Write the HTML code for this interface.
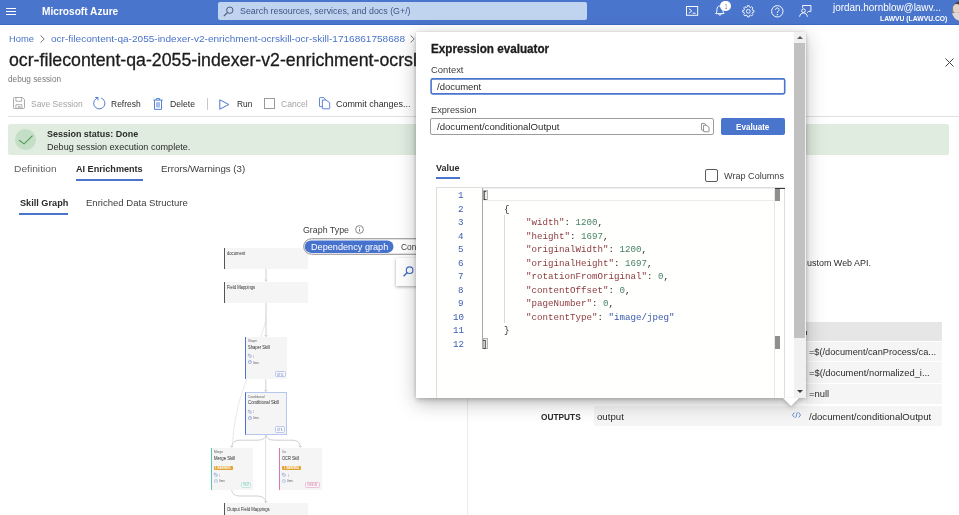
<!DOCTYPE html>
<html>
<head>
<meta charset="utf-8">
<title>Debug session</title>
<style>
*{box-sizing:border-box;margin:0;padding:0}
html,body{width:959px;height:515px;overflow:hidden;background:#fff}
body{position:relative;font-family:"Liberation Sans",sans-serif;color:#242424;font-size:11px}
#wrap{position:absolute;left:0;top:0;width:959px;height:515px;overflow:hidden;will-change:transform}
.a{position:absolute}
.t{position:absolute;white-space:nowrap;line-height:1;color:#2b2b2b;transform-origin:0 0}
.b{font-weight:bold}
.m{font-family:"Liberation Mono",monospace}
.w{color:#fff}
.g{color:#5f5f5f}
.lg{color:#a3a3a3}
.g2{color:#3d3d3d}
.g3{color:#7a7a7a}
.tt{color:#1c1c1c;-webkit-text-stroke:.3px #1c1c1c}
.sp{color:#3d5484}
.lk{color:#4a73c9}
.k{color:#8c3a3d}
.n{color:#4a8266}
.s{color:#3a5ba8}
.ln{color:#3d5cb0}
.bdg{color:#3f5078}
.c6f88d4{color:#5f7ace}
.c7fd0bd{color:#5fc2ab}
.cdc8fb4{color:#d0709f}
i{font-style:normal}
svg{position:absolute;overflow:visible}
#top{left:0;top:0;width:959px;height:25px;background:#4a75cc;border-bottom:1px solid #3f69c6}
#search{left:218px;top:2px;width:369px;height:18.4px;background:#c0d4f0;border-radius:2px}
#status{left:8px;top:124px;width:941px;height:31px;background:#dfecdf;border-radius:2.5px}
#modal{left:416px;top:32px;width:389.5px;height:366px;background:#fff;box-shadow:0 5px 18px rgba(0,0,0,.25),0 3px 5px rgba(0,0,0,.15),0 0 4px rgba(0,0,0,.13)}
.ul{position:absolute;height:2px;background:#4a75cc}
.row{position:absolute;left:806px;width:135.7px;height:19.5px;background:#f5f5f5}
.node{position:absolute;background:#f5f5f5}
</style>
</head>
<body>
<div id="wrap">
<!-- TOP BAR -->
<div id="top" class="a"></div>
<div id="search" class="a"></div>
<svg style="left:6px;top:7.5px" width="10" height="7" viewBox="0 0 10 7"><path d="M0 .5h10M0 3.5h10M0 6.5h10" stroke="#fff" stroke-width="1" fill="none"/></svg>
<span class="t b w" style="left:42.30px;top:6px;font-size:11px;transform:scaleX(0.9217)">Microsoft Azure</span>
<svg style="left:223px;top:6px" width="11" height="11" viewBox="0 0 11 11"><circle cx="6.8" cy="4.2" r="3.2" stroke="#4b5a78" stroke-width="1" fill="none"/><path d="M4.5 6.5L.8 10.2" stroke="#4b5a78" stroke-width="1.1"/></svg>
<span class="t sp" style="left:239.70px;top:6px;font-size:9.9px;transform:scaleX(0.8969)">Search resources, services, and docs (G+/)</span>
<span class="t w" style="left:833.44px;top:2px;font-size:10.5px;transform:scaleX(0.9446)">jordan.hornblow@lawv...</span>
<span class="t b w" style="left:879.70px;top:15px;font-size:7.2px;transform:scaleX(0.9421)">LAWVU (LAWVU.CO)</span>

<!-- TOP RIGHT ICONS -->
<svg style="left:685.5px;top:6px" width="12.2" height="9.8" viewBox="0 0 12.2 9.8"><g stroke="#fff" stroke-width=".95" fill="none"><rect x=".5" y=".5" width="11.2" height="8.8"/><path d="M2.9 2.6l2.9 2.3-2.9 2.3M6.6 7.2h3"/></g></svg>
<svg style="left:715px;top:5px" width="10" height="11" viewBox="0 0 10 11"><g stroke="#fff" stroke-width=".95" fill="none"><path d="M.6 8.6c1.1-.9 1.3-1.9 1.3-4.1C1.9 2.4 3.1 1 4.9 1s3 1.400 3 3.500c0 2.200.2 3.200 1.300 4.100z"/><path d="M3.600 9c.2.900.7 1.300 1.300 1.300s1.100-.4 1.300-1.300"/></g></svg>
<div class="a" style="left:720.2px;top:1.1px;width:10.4px;height:10.4px;border-radius:50%;background:#fff"></div>
<span class="t bdg" style="left:724.60px;top:3px;font-size:7.4px;transform:scaleX(0.5000)">1</span>
<svg style="left:742px;top:4.6px" width="12.6" height="12.6" viewBox="-6.3 -6.3 12.6 12.6"><g stroke="#fff" stroke-width=".9" fill="none" stroke-linejoin="round"><circle r="1.9"/><path d="M-1.13 -4.25 L-0.85 -5.64 L0.85 -5.64 L1.13 -4.25 L2.21 -3.81 L3.38 -4.59 L4.59 -3.38 L3.81 -2.21 L4.25 -1.13 L5.64 -0.85 L5.64 0.85 L4.25 1.13 L3.81 2.21 L4.59 3.38 L3.38 4.59 L2.21 3.81 L1.13 4.25 L0.85 5.64 L-0.85 5.64 L-1.13 4.25 L-2.21 3.81 L-3.38 4.59 L-4.59 3.38 L-3.81 2.21 L-4.25 1.13 L-5.64 0.85 L-5.64 -0.85 L-4.25 -1.13 L-3.81 -2.21 L-4.59 -3.38 L-3.38 -4.59 L-2.21 -3.81Z"/></g></svg>
<svg style="left:770.600px;top:4.600px" width="12.6" height="12.6" viewBox="-6.3 -6.3 12.6 12.6"><g stroke="#fff" stroke-width=".95" fill="none"><circle r="5.700"/><path d="M-1.800 -1.500c0-1.100.8-1.800 1.800-1.800s1.800.7 1.800 1.700c0 1.500-1.800 1.500-1.800 3.200"/></g><circle cy="3.400" r=".65" fill="#fff"/></svg>
<svg style="left:799px;top:5px" width="12.5" height="12" viewBox="0 0 12.5 12"><g stroke="#fff" stroke-width=".95" fill="none"><circle cx="4.500" cy="5.700" r="1.800"/><path d="M.6 11.700c.3-2.400 1.900-3.700 3.900-3.700s3.600 1.300 3.900 3.700"/><path d="M3.600 2.800V.5h8.300v5.900H9.600L8.200 7.800"/></g></svg>
<div class="a" style="left:951.5px;top:1.2px;width:19.6px;height:19.6px;border-radius:50%;background:#8b8078;overflow:hidden"><div class="a" style="left:0;top:0;width:9px;height:5px;background:#4a4340"></div><div class="a" style="left:1.5px;top:3px;width:7px;height:9px;border-radius:45%;background:#e3d3c8"></div><div class="a" style="left:0;top:11.5px;width:10px;height:9px;background:#dcd9d8"></div></div>

<!-- BREADCRUMB + TITLE -->
<span class="t lk" style="left:8.50px;top:34px;font-size:9.9px;transform:scaleX(0.9497)">Home</span>
<span class="t lk" style="left:50.50px;top:34px;font-size:9.9px;transform:scaleX(1.0172)">ocr-filecontent-qa-2055-indexer-v2-enrichment-ocrskill-ocr-skill-1716861758688</span>
<span class="t tt" style="left:8.70px;top:52px;font-size:17.8px;transform:scaleX(0.9968)">ocr-filecontent-qa-2055-indexer-v2-enrichment-ocrsl</span>
<span class="t g3" style="left:8.20px;top:75px;font-size:9px;transform:scaleX(0.9149)">debug session</span>

<!-- GRAPH -->
<svg style="left:0;top:0" width="420" height="515" viewBox="0 0 420 515">
<g stroke="#c9c9c9" stroke-width=".9" fill="none">
<path d="M266 268.8V281"/><path d="M264.6 279.7l1.4 1.6 1.4-1.6" />
<path d="M266 303V336.4"/><path d="M264.6 335l1.4 1.6 1.4-1.6"/>
<path d="M265.8 379.2V391.6"/><path d="M264.4 390.2l1.4 1.6 1.4-1.6"/>
<path d="M265.6 434.6V502.4" stroke="#dedede"/><path d="M264.6 501l1.400 1.600 1.400-1.600"/>
<path d="M266 434.6C265.5 439 262 440.2 256 440.2H240C234.5 440.2 232 442.5 231.8 447"/><path d="M230.4 445.8l1.4 1.6 1.4-1.6"/>
<path d="M266 434.6C266.5 439 270 440.2 276 440.2H292C297.5 440.2 300 442.5 300.3 447"/><path d="M298.9 445.8l1.4 1.6 1.4-1.6"/>
<path d="M231.7 489.7C232 494 235 496 240 496H256C262 496 265.5 498 266 502.4"/>
</g>
<g stroke="#dadada" stroke-width=".6" fill="none">
<path d="M266 318C265 326 262.5 331 261 337"/>
<path d="M247 379.2C240 395 233.5 420 232.3 447"/>
</g>
</svg>
<div class="node" style="left:224px;top:247.5px;width:84px;height:21.3px;border-left:1.3px solid #555"></div>
<div class="node" style="left:224px;top:281.8px;width:84px;height:21.2px;border-left:1.3px solid #555"></div>
<div class="node" style="left:245px;top:337px;width:41.7px;height:42.2px;border-left:1.5px solid #5672c8"></div>
<div class="node" style="left:245px;top:392.3px;width:42px;height:42.3px;border:1px solid #b7c6ee;border-left:1.5px solid #4f6cc6"></div>
<div class="node" style="left:211px;top:447.8px;width:41.8px;height:41.9px;border-left:1.5px solid #5cc5ad"></div>
<div class="node" style="left:279.2px;top:447.8px;width:42.6px;height:41.9px;border-left:1.7px solid #d579a6"></div>
<div class="node" style="left:224.3px;top:503.1px;width:83.7px;height:12px;border-left:1.3px solid #555"></div>
<span class="t" style="left:227.20px;top:252px;font-size:4.9px;transform:scaleX(0.8500)">document</span>
<span class="t" style="left:227.20px;top:286px;font-size:4.9px;transform:scaleX(0.8482)">Field Mappings</span>
<span class="t" style="left:227.40px;top:508px;font-size:4.9px;transform:scaleX(0.8682)">Output Field Mappings</span>
<span class="t g" style="left:248.00px;top:340px;font-size:3.7px;transform:scaleX(0.7660)">Shaper</span>
<span class="t" style="left:248.00px;top:345px;font-size:5.2px;transform:scaleX(0.7883)">Shaper Skill</span>
<span class="t g" style="left:247.90px;top:396px;font-size:3.7px;transform:scaleX(0.8964)">Conditional</span>
<span class="t" style="left:247.90px;top:400px;font-size:5.2px;transform:scaleX(0.8353)">Conditional Skill</span>
<span class="t g" style="left:214.00px;top:451px;font-size:3.7px;transform:scaleX(0.8653)">Merge</span>
<span class="t" style="left:214.00px;top:456px;font-size:5.2px;transform:scaleX(0.8234)">Merge Skill</span>
<span class="t g" style="left:282.20px;top:451px;font-size:3.7px;transform:scaleX(0.7300)">Ocr</span>
<span class="t" style="left:282.20px;top:456px;font-size:5.2px;transform:scaleX(0.7659)">OCR Skill</span>

<svg style="left:248px;top:354.4px" width="4" height="4" viewBox="0 0 4 4"><path d="M.3 .3h1.600l1.800 1.800-1.600 1.600L.3 1.900z" stroke="#5672c8" stroke-width=".45" fill="none"/><path d="M1.300 .9l1.900 1.900" stroke="#5672c8" stroke-width=".35"/></svg>
<svg style="left:248px;top:360.3px" width="4" height="4" viewBox="0 0 4 4"><circle cx="1.900" cy="2" r="1.600" stroke="#5672c8" stroke-width=".45" fill="none"/><path d="M1.900 1.100V2h.7" stroke="#5672c8" stroke-width=".35" fill="none"/></svg>
<span class="t g" style="left:253.20px;top:356px;font-size:3.6px;transform:scaleX(0.4500)">1</span>
<span class="t g" style="left:253.00px;top:362px;font-size:3.6px;transform:scaleX(0.8581)">0ms</span>
<div class="a" style="left:275.2px;top:371.4px;width:10.4px;height:5.9px;border:1px solid #bcc8ec;border-radius:1.5px;background:#f8f8fa"></div>
<span class="t c6f88d4" style="left:277.20px;top:374px;font-size:3.4px;transform:scaleX(0.8577)">UTIL</span>
<svg style="left:248px;top:409.8px" width="4" height="4" viewBox="0 0 4 4"><path d="M.3 .3h1.600l1.800 1.800-1.600 1.600L.3 1.900z" stroke="#5672c8" stroke-width=".45" fill="none"/><path d="M1.300 .9l1.900 1.900" stroke="#5672c8" stroke-width=".35"/></svg>
<svg style="left:248px;top:415.7px" width="4" height="4" viewBox="0 0 4 4"><circle cx="1.900" cy="2" r="1.600" stroke="#5672c8" stroke-width=".45" fill="none"/><path d="M1.900 1.100V2h.7" stroke="#5672c8" stroke-width=".35" fill="none"/></svg>
<span class="t g" style="left:253.20px;top:411px;font-size:3.6px;transform:scaleX(0.4500)">1</span>
<span class="t g" style="left:253.00px;top:417px;font-size:3.6px;transform:scaleX(0.8581)">0ms</span>
<div class="a" style="left:275.2px;top:426.4px;width:10.2px;height:6.4px;border:1px solid #bcc8ec;border-radius:1.5px;background:#f8f8fa"></div>
<span class="t c6f88d4" style="left:277.20px;top:429px;font-size:3.4px;transform:scaleX(0.8309)">UTIL</span>
<div class="a" style="left:213.7px;top:465.5px;width:19.6px;height:4.7px;background:#e2a336;border-radius:1px"></div>
<span class="t b w" style="left:215.30px;top:467px;font-size:3.1px;transform:scaleX(0.8938)">1 WARNING</span>
<svg style="left:214px;top:473.2px" width="4" height="4" viewBox="0 0 4 4"><path d="M.3 .3h1.600l1.800 1.800-1.600 1.600L.3 1.900z" stroke="#5672c8" stroke-width=".45" fill="none"/><path d="M1.300 .9l1.900 1.900" stroke="#5672c8" stroke-width=".35"/></svg>
<svg style="left:214px;top:479.1px" width="4" height="4" viewBox="0 0 4 4"><circle cx="1.900" cy="2" r="1.600" stroke="#8a9fd8" stroke-width=".45" fill="none"/><path d="M1.900 1.100V2h.7" stroke="#8a9fd8" stroke-width=".35" fill="none"/></svg>
<span class="t g" style="left:219.20px;top:475px;font-size:3.6px;transform:scaleX(0.4500)">1</span>
<span class="t g" style="left:219.00px;top:480px;font-size:3.6px;transform:scaleX(0.8581)">0ms</span>
<div class="a" style="left:240.6px;top:481.6px;width:10.8px;height:6.8px;border:1px solid #bfe6dc;border-radius:1.5px;background:#f8f8fa"></div>
<span class="t c7fd0bd" style="left:242.50px;top:484px;font-size:3.7px;transform:scaleX(0.6980)">TEXT</span>
<div class="a" style="left:282px;top:465.5px;width:19.0px;height:4.7px;background:#e2a336;border-radius:1px"></div>
<span class="t b w" style="left:283.60px;top:467px;font-size:3.1px;transform:scaleX(0.8607)">1 WARNING</span>
<svg style="left:282.3px;top:473.2px" width="4" height="4" viewBox="0 0 4 4"><path d="M.3 .3h1.600l1.800 1.800-1.600 1.600L.3 1.900z" stroke="#5672c8" stroke-width=".45" fill="none"/><path d="M1.300 .9l1.900 1.900" stroke="#5672c8" stroke-width=".35"/></svg>
<svg style="left:282.3px;top:479.1px" width="4" height="4" viewBox="0 0 4 4"><circle cx="1.900" cy="2" r="1.600" stroke="#8a9fd8" stroke-width=".45" fill="none"/><path d="M1.900 1.100V2h.7" stroke="#8a9fd8" stroke-width=".35" fill="none"/></svg>
<span class="t g" style="left:287.50px;top:475px;font-size:3.6px;transform:scaleX(0.4500)">1</span>
<span class="t g" style="left:287.30px;top:480px;font-size:3.6px;transform:scaleX(0.8581)">0ms</span>
<div class="a" style="left:305.2px;top:481.6px;width:14.6px;height:6.8px;border:1px solid #ecc0d5;border-radius:1.5px;background:#f8f8fa"></div>
<span class="t cdc8fb4" style="left:307.40px;top:484px;font-size:3.7px;transform:scaleX(0.8024)">VISION</span>

<!-- CLOSE X -->
<svg style="left:945px;top:58px" width="9" height="9" viewBox="0 0 9 9"><path d="M.5 .5l8 8M8.5 .5l-8 8" stroke="#444" stroke-width="1" fill="none"/></svg>
<!-- TOOLBAR -->
<svg style="left:13.2px;top:97.2px" width="12" height="12" viewBox="0 0 12 12"><path d="M.5 1.300q0-.8.8-.8h8.200l2 2v8.200q0 .8-.8.800H1.300q-.8 0-.8-.8z M2.900 .5v3.700h5.800V.5 M2.900 11.500V7.700h6v3.800 M5.300 11.500V9.600h1.800v1.900" stroke="#a6a6a6" stroke-width=".95" fill="none"/></svg>
<span class="t lg" style="left:30.80px;top:99px;font-size:9.9px;transform:scaleX(0.8549)">Save Session</span>
<svg style="left:93px;top:97px" width="12.6" height="12.6" viewBox="0 0 12.6 12.6"><path d="M8.22 1.040A5.600 5.600 0 1 1 3.100 1.700L4.700 .7" stroke="#4f7ad0" stroke-width="1" fill="none"/><path d="M2.200 .5H5V3.400" stroke="#4f7ad0" stroke-width="1" fill="none"/></svg>
<span class="t" style="left:111.30px;top:99px;font-size:9.9px;transform:scaleX(0.8596)">Refresh</span>
<svg style="left:153px;top:97.5px" width="10" height="12" viewBox="0 0 10 12"><path d="M.3 2.1h9.4M3.3 2.1V.6h3.4v1.5M1.5 2.1v9.3h7V2.1M3.9 4.3v5M6.1 4.3v5" stroke="#5580d6" stroke-width="1" fill="none"/><path d="M3.300 4.200h3.400v5.200H3.300z" fill="#a9bfec"/></svg>
<span class="t" style="left:169.60px;top:99px;font-size:9.9px;transform:scaleX(0.8743)">Delete</span>
<div class="a" style="left:207px;top:97.5px;width:1px;height:12px;background:#c8c8c8"></div>
<svg style="left:219px;top:98.5px" width="11" height="11" viewBox="0 0 11 11"><path d="M.8 .8l9 4.7-9 4.7z" stroke="#4a75cc" stroke-width="1" fill="none" stroke-linejoin="round"/></svg>
<span class="t" style="left:236.80px;top:99px;font-size:9.9px;transform:scaleX(0.8511)">Run</span>
<div class="a" style="left:263.5px;top:98px;width:11px;height:11px;border:1px solid #9a9a9a"></div>
<span class="t lg" style="left:280.50px;top:99px;font-size:9.9px;transform:scaleX(0.8676)">Cancel</span>
<svg style="left:319px;top:97px" width="11.4" height="12.4" viewBox="0 0 11.4 12.4"><g stroke="#5580d6" stroke-width=".95" fill="none" stroke-linejoin="round"><path d="M3.400 9.600H1.100q-.6 0-.6-.6V1.200q0-.6.6-.6H4.900L6.900 3"/><path d="M3.400 3H6.900L10.700 5.700V11.200q0 .6-.6.600H4q-.6 0-.6-.6Z"/></g></svg>
<span class="t" style="left:335.80px;top:99px;font-size:9.9px;transform:scaleX(0.9034)">Commit changes...</span>
<div class="a" style="left:8px;top:116px;width:951px;height:1px;background:#e1e1e1"></div>
<!-- STATUS -->
<div id="status" class="a"></div>
<div class="a" style="left:15px;top:128.8px;width:21.2px;height:21.2px;border-radius:50%;background:#c4dfc5"></div>
<svg style="left:15px;top:128.8px" width="21.2" height="21.2" viewBox="0 0 21.2 21.2"><path d="M4 11.2l5.2 3.7 8.3-8.3" stroke="#4f9a55" stroke-width="1.1" fill="none"/></svg>
<span class="t b" style="left:47.00px;top:129px;font-size:9.9px;transform:scaleX(0.9076)">Session status: Done</span>
<span class="t" style="left:47.40px;top:142px;font-size:9.9px;transform:scaleX(0.9191)">Debug session execution complete.</span>
<!-- TABS -->
<span class="t g" style="left:14.20px;top:164px;font-size:9.9px;transform:scaleX(1.0350)">Definition</span>
<span class="t b" style="left:75.90px;top:164px;font-size:9.9px;transform:scaleX(0.9199)">AI Enrichments</span>
<span class="t g2" style="left:160.50px;top:164px;font-size:9.9px;transform:scaleX(0.9814)">Errors/Warnings (3)</span>
<div class="ul" style="left:75.7px;top:178.7px;width:67.5px"></div>
<span class="t b" style="left:19.60px;top:198px;font-size:9.9px;transform:scaleX(0.9270)">Skill Graph</span>
<span class="t g2" style="left:85.60px;top:198px;font-size:9.9px;transform:scaleX(0.9661)">Enriched Data Structure</span>
<div class="ul" style="left:19.4px;top:213px;width:48.7px"></div>
<!-- GRAPH TYPE -->
<span class="t g2" style="left:303.20px;top:225px;font-size:9.9px;transform:scaleX(0.8943)">Graph Type</span>
<svg style="left:355.400px;top:225.1px" width="9" height="9" viewBox="0 0 9 9"><circle cx="4.5" cy="4.5" r="3.9" stroke="#6a6a6a" stroke-width=".8" fill="none"/><path d="M4.5 3.9v2.8M4.5 2.2v.9" stroke="#6a6a6a" stroke-width=".8"/></svg>
<svg style="left:0;top:0" width="460" height="260" viewBox="0 0 460 260"><rect x="303.7" y="238.750" width="150" height="15.500" rx="7.750" fill="#fff" stroke="#8c8c8c" stroke-width="1"/><rect x="304.7" y="240.400" width="88.800" height="12.500" rx="6.250" fill="#4672ce"/></svg>
<span class="t w" style="left:310.90px;top:242px;font-size:9.9px;transform:scaleX(0.9258)">Dependency graph</span>
<span class="t g2" style="left:400.70px;top:242px;font-size:9.9px;transform:scaleX(0.8455)">Con</span>
<div class="a" style="left:396px;top:258.4px;width:30px;height:27.6px;background:#fff;box-shadow:0 1px 3px rgba(0,0,0,.35)"></div>
<svg style="left:403px;top:265.5px" width="11" height="11" viewBox="0 0 11 11"><circle cx="6.6" cy="4.2" r="3.3" stroke="#3f6bc6" stroke-width="1.1" fill="none"/><path d="M4.3 6.6L.6 10.3" stroke="#3f6bc6" stroke-width="1.4"/></svg>

<!-- BREADCRUMB CHEVRONS -->
<svg style="left:39.5px;top:34.5px" width="5" height="8" viewBox="0 0 5 8"><path d="M.6 .5l3.6 3.5L.6 7.5" stroke="#6b6b6b" stroke-width=".9" fill="none"/></svg>
<svg style="left:409.5px;top:34.5px" width="5" height="8" viewBox="0 0 5 8"><path d="M.6 .5l3.6 3.5L.6 7.5" stroke="#6b6b6b" stroke-width=".9" fill="none"/></svg>
<!-- RIGHT PANEL (behind modal) -->
<div class="a" style="left:467px;top:390px;width:1px;height:125px;background:#ebebeb"></div>
<span class="t" style="left:807.20px;top:258px;font-size:9.9px;transform:scaleX(0.9060)">ustom Web API.</span>
<div class="row" style="top:322px;height:18.7px;background:#e6e6e6"></div>
<div class="row" style="top:341.6px;height:19.4px"></div>
<div class="row" style="top:362.4px;height:20.3px"></div>
<div class="row" style="top:383.9px;height:19.7px"></div>
<div class="row" style="top:406px;left:593.5px;width:348.2px;height:20px"></div>
<span class="t" style="left:808.90px;top:347px;font-size:9.9px;transform:scaleX(0.9310)">=$(/document/canProcess/ca...</span>
<span class="t" style="left:808.90px;top:368px;font-size:9.9px;transform:scaleX(0.9458)">=$(/document/normalized_i...</span>
<span class="t" style="left:808.90px;top:389px;font-size:9.9px;transform:scaleX(0.9549)">=null</span>
<span class="t" style="left:808.60px;top:412px;font-size:9.9px;transform:scaleX(0.9717)">/document/conditionalOutput</span>
<span class="t b" style="left:540.90px;top:412px;font-size:9.8px;transform:scaleX(0.8483)">OUTPUTS</span>
<span class="t" style="left:597.40px;top:412px;font-size:9.9px;transform:scaleX(0.9779)">output</span>
<svg style="left:792.3px;top:412px" width="9" height="6" viewBox="0 0 9 6"><path d="M2.3 .5L.5 3l1.8 2.5M6.7 .5L8.5 3 6.7 5.5M5.3 .3L3.7 5.7" stroke="#4a75cc" stroke-width=".8" fill="none"/></svg>

<!-- MODAL -->
<div id="modal" class="a"></div>
<svg style="left:782.5px;top:397.5px;filter:drop-shadow(0 2px 2px rgba(0,0,0,.22))" width="16" height="9" viewBox="0 0 16 9"><path d="M0 0h16L8 8z" fill="#fff"/></svg>
<!-- modal scrollbar -->
<div class="a" style="left:794px;top:32px;width:11.5px;height:366px;background:#f1f1f1"></div>
<div class="a" style="left:794px;top:43.3px;width:10.8px;height:294.7px;background:#c1c1c1"></div>
<svg style="left:796.7px;top:36.3px" width="6" height="3" viewBox="0 0 6 3"><path d="M0 3L3 0l3 3z" fill="#5e5e5e"/></svg>
<svg style="left:796.7px;top:390.2px" width="6" height="3" viewBox="0 0 6 3"><path d="M0 0h6L3 3z" fill="#3c3c3c"/></svg>
<span class="t b tt" style="left:430.80px;top:43px;font-size:12.2px;transform:scaleX(0.9584)">Expression evaluator</span>
<span class="t g2" style="left:431.30px;top:65px;font-size:9.9px;transform:scaleX(0.9537)">Context</span>
<svg style="left:0;top:0" width="800" height="100" viewBox="0 0 800 100"><rect x="431.1" y="78.900" width="353.6" height="15" rx="1.6" stroke="#4a75cc" stroke-width="1.6" fill="#fff"/></svg>
<span class="t" style="left:437.00px;top:82px;font-size:9.9px;transform:scaleX(0.9597)">/document</span>
<span class="t g2" style="left:431.30px;top:105px;font-size:9.9px;transform:scaleX(0.9326)">Expression</span>
<div class="a" style="left:430px;top:118px;width:284px;height:17.4px;border:1px solid #9c9c9c;border-radius:2px;background:#fff"></div>
<span class="t" style="left:437.00px;top:122px;font-size:9.9px;transform:scaleX(0.9740)">/document/conditionalOutput</span>
<svg style="left:700.5px;top:122.7px" width="8.600" height="9.200" viewBox="0 0 11.4 12.4"><g stroke="#7d7d7d" stroke-width="1.150" fill="none" stroke-linejoin="round"><path d="M3.400 9.600H1.100q-.6 0-.6-.6V1.200q0-.6.6-.6H4.900L6.900 3"/><path d="M3.400 3H6.900L10.700 5.700V11.200q0 .6-.6.600H4q-.6 0-.6-.6Z"/></g></svg>
<div class="a" style="left:720.8px;top:118.2px;width:64.6px;height:17px;background:#4a75cc;border-radius:2px"></div>
<span class="t b w" style="left:736.20px;top:122px;font-size:9.9px;transform:scaleX(0.8219)">Evaluate</span>
<span class="t b" style="left:436.40px;top:163px;font-size:9.9px;transform:scaleX(0.9123)">Value</span>
<div class="ul" style="left:436.2px;top:177.1px;width:24.3px;height:1.8px"></div>
<div class="a" style="left:705px;top:169.3px;width:13.2px;height:13.2px;border:1px solid #5a5a5a;border-radius:2px;background:#fff"></div>
<span class="t g2" style="left:724.00px;top:171px;font-size:9.9px;transform:scaleX(0.9205)">Wrap Columns</span>
<div class="a" style="left:805.5px;top:330.7px;width:1.2px;height:4.700px;background:#3a3a3a"></div>

<!-- EDITOR -->
<div class="a" style="left:436.3px;top:187.3px;width:348.7px;height:210.7px;border:1px solid #dedede;border-bottom:0;background:#fffffe"></div>
<div class="a" style="left:482.3px;top:188.2px;width:291.5px;height:12.6px;border-top:1.3px solid #ececec;border-bottom:1.3px solid #ececec"></div>
<div class="a" style="left:482.4px;top:188.2px;width:.9px;height:161px;background:#a9a9a9"></div>
<div class="a" style="left:504.3px;top:215.3px;width:.9px;height:107.5px;background:#d9d9d9"></div>
<div class="a" style="left:482.9px;top:189.6px;width:5px;height:10.6px;border:.8px solid #b4b4b4;background:#ececec"></div>
<div class="a" style="left:482.9px;top:338.2px;width:5px;height:10.6px;border:.8px solid #b4b4b4;background:#ececec"></div>
<div class="a" style="left:773.8px;top:188.2px;width:.8px;height:209.8px;background:#e6e6e6"></div>
<div class="a" style="left:774.6px;top:187.6px;width:10.2px;height:1.7px;background:#3a3a3a"></div>
<div class="a" style="left:775.2px;top:189.3px;width:4.8px;height:11.7px;background:#8f8f8f"></div>
<div class="a" style="left:775.2px;top:336.2px;width:4.8px;height:13px;background:#8f8f8f"></div>
<span class="t m ln" style="left:458.1px;top:191px;font-size:9.8px;transform:scaleX(0.9354)">1</span>
<span class="t m" style="left:482.3px;top:191px;font-size:9.8px;transform:scaleX(0.9354)">&#91;</span>
<span class="t m ln" style="left:458.1px;top:205px;font-size:9.8px;transform:scaleX(0.9354)">2</span>
<span class="t m" style="left:504.3px;top:205px;font-size:9.8px;transform:scaleX(0.9354)">{</span>
<span class="t m ln" style="left:458.1px;top:218px;font-size:9.8px;transform:scaleX(0.9354)">3</span>
<span class="t m" style="left:526.3px;top:218px;font-size:9.8px;transform:scaleX(0.9354)"><i class="k">"width"</i>: <i class="n">1200</i>,</span>
<span class="t m ln" style="left:458.1px;top:232px;font-size:9.8px;transform:scaleX(0.9354)">4</span>
<span class="t m" style="left:526.3px;top:232px;font-size:9.8px;transform:scaleX(0.9354)"><i class="k">"height"</i>: <i class="n">1697</i>,</span>
<span class="t m ln" style="left:458.1px;top:245px;font-size:9.8px;transform:scaleX(0.9354)">5</span>
<span class="t m" style="left:526.3px;top:245px;font-size:9.8px;transform:scaleX(0.9354)"><i class="k">"originalWidth"</i>: <i class="n">1200</i>,</span>
<span class="t m ln" style="left:458.1px;top:259px;font-size:9.8px;transform:scaleX(0.9354)">6</span>
<span class="t m" style="left:526.3px;top:259px;font-size:9.8px;transform:scaleX(0.9354)"><i class="k">"originalHeight"</i>: <i class="n">1697</i>,</span>
<span class="t m ln" style="left:458.1px;top:272px;font-size:9.8px;transform:scaleX(0.9354)">7</span>
<span class="t m" style="left:526.3px;top:272px;font-size:9.8px;transform:scaleX(0.9354)"><i class="k">"rotationFromOriginal"</i>: <i class="n">0</i>,</span>
<span class="t m ln" style="left:458.1px;top:286px;font-size:9.8px;transform:scaleX(0.9354)">8</span>
<span class="t m" style="left:526.3px;top:286px;font-size:9.8px;transform:scaleX(0.9354)"><i class="k">"contentOffset"</i>: <i class="n">0</i>,</span>
<span class="t m ln" style="left:458.1px;top:299px;font-size:9.8px;transform:scaleX(0.9354)">9</span>
<span class="t m" style="left:526.3px;top:299px;font-size:9.8px;transform:scaleX(0.9354)"><i class="k">"pageNumber"</i>: <i class="n">0</i>,</span>
<span class="t m ln" style="left:452.6px;top:313px;font-size:9.8px;transform:scaleX(0.9354)">10</span>
<span class="t m" style="left:526.3px;top:313px;font-size:9.8px;transform:scaleX(0.9354)"><i class="k">"contentType"</i>: <i class="s">"image/jpeg"</i></span>
<span class="t m ln" style="left:452.6px;top:326px;font-size:9.8px;transform:scaleX(0.9354)">11</span>
<span class="t m" style="left:504.3px;top:326px;font-size:9.8px;transform:scaleX(0.9354)">}</span>
<span class="t m ln" style="left:452.6px;top:340px;font-size:9.8px;transform:scaleX(0.9354)">12</span>
<span class="t m" style="left:482.3px;top:340px;font-size:9.8px;transform:scaleX(0.9354)">&#93;</span>

</div>
</body>
</html>
